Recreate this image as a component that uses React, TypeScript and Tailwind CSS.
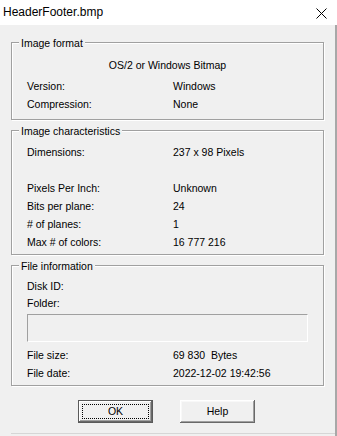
import React from "react";

const font = { fontFamily: '"Liberation Sans", Arial, sans-serif' };

function Group({
  label,
  labelWidth,
  className,
  children,
}: {
  label: string;
  labelWidth?: string;
  className: string;
  children: React.ReactNode;
}) {
  return (
    <div
      className={`relative box-border w-[313px] border border-[#a0a0a0] shadow-[inset_1px_1px_0_#ffffff,1px_1px_0_#ffffff] ${className}`}
    >
      <div className="absolute left-[7px] top-[-9px] h-[18px] bg-[#f0f0f0] px-[2px] leading-[18px] text-black">
        {label}
      </div>
      {children}
    </div>
  );
}

function Row({ label, value, h = "h-[18px]" }: { label: string; value?: string; h?: string }) {
  return (
    <div className={`flex ${h} items-center leading-[18px]`}>
      <div className="w-[146px] shrink-0">{label}</div>
      <div className="whitespace-pre">{value}</div>
    </div>
  );
}

export default function App() {
  return (
    <div
      className="w-[337px] h-[436px] overflow-hidden bg-[#f0f0f0] text-[10.5px] text-black"
      style={font}
    >
      {/* Title bar */}
      <div className="flex h-[25px] items-center justify-between bg-white pl-[3px] pr-[10px]">
        <span className="text-[12px] leading-[25px] text-black">HeaderFooter.bmp</span>
        <svg width="11" height="11" viewBox="0 0 11 11" className="mt-[1px]">
          <path d="M0.5 0.5 L10.5 10.5 M10.5 0.5 L0.5 10.5" stroke="#000" strokeWidth="1" />
        </svg>
      </div>

      {/* Body */}
      <div className="flex h-[411px] flex-col border-r-2 border-[#a8a8a8] pl-[11px] pt-[17px]">
        <Group label="Image format" className="h-[78px]">
          <div className="px-[15px] pt-[13px]">
            <div className="h-[18px] text-center leading-[18px]">OS/2 or Windows Bitmap</div>
            <div className="mt-[3px]">
              <Row label="Version:" value="Windows" />
              <Row label="Compression:" value="None" />
            </div>
          </div>
        </Group>

        <Group label="Image characteristics" className="mt-[10px] h-[125px]">
          <div className="px-[15px] pt-[12px]">
            <Row label="Dimensions:" value="237 x 98 Pixels" />
            <div className="h-[18px]" />
            <Row label="Pixels Per Inch:" value="Unknown" />
            <Row label="Bits per plane:" value="24" />
            <Row label="# of planes:" value="1" />
            <Row label="Max # of colors:" value="16 777 216" />
          </div>
        </Group>

        <Group label="File information" className="mt-[10px] h-[121px]">
          <div className="px-[15px] pt-[11px]">
            <Row label="Disk ID:" h="h-[17px]" />
            <Row label="Folder:" h="h-[17px]" />
            <div className="mt-[3px] h-[28px] w-[281px] border-l border-t border-[#a0a0a0] border-b-white border-r-white border-b border-r" />
            <div className="mt-[4px]">
              <Row label="File size:" value="69 830  Bytes" />
              <Row label="File date:" value="2022-12-02 19:42:56" />
            </div>
          </div>
        </Group>

        {/* Buttons */}
        <div className="mt-[14px] flex gap-[27px] pl-[67px]">
          <div className="box-border flex h-[23px] w-[75px] items-center justify-center border border-[#5a5a5a] bg-[#f0f0f0] shadow-[inset_-1px_-1px_0_#696969,inset_1px_1px_0_#ffffff,inset_-2px_-2px_0_#a0a0a0]">
            <div className="flex h-[15px] w-[67px] items-center justify-center border border-dotted border-black leading-none">
              OK
            </div>
          </div>
          <div className="box-border flex h-[23px] w-[75px] items-center justify-center bg-[#f0f0f0] shadow-[inset_-1px_-1px_0_#696969,inset_1px_1px_0_#ffffff,inset_-2px_-2px_0_#a0a0a0,inset_2px_2px_0_#f8f8f8]">
            Help
          </div>
        </div>

        <div className="mt-[10px] h-px w-full bg-[#d6d6d6]" />
      </div>
    </div>
  );
}
